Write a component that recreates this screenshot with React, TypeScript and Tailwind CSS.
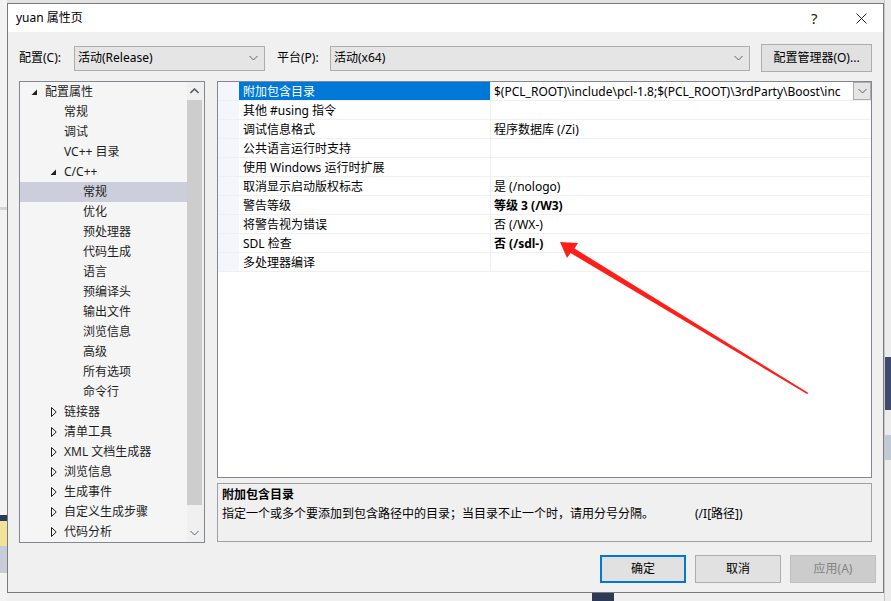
import React from "react";

const FONT = "font-['Noto_Sans','Noto_Sans_CJK_SC',sans-serif]";

type TreeItem = { t: string; lvl: number; tri?: "open" | "closed"; sel?: boolean };

const tree: TreeItem[] = [
  { t: "配置属性", lvl: 0, tri: "open" },
  { t: "常规", lvl: 1 },
  { t: "调试", lvl: 1 },
  { t: "VC++ 目录", lvl: 1 },
  { t: "C/C++", lvl: 1, tri: "open" },
  { t: "常规", lvl: 2, sel: true },
  { t: "优化", lvl: 2 },
  { t: "预处理器", lvl: 2 },
  { t: "代码生成", lvl: 2 },
  { t: "语言", lvl: 2 },
  { t: "预编译头", lvl: 2 },
  { t: "输出文件", lvl: 2 },
  { t: "浏览信息", lvl: 2 },
  { t: "高级", lvl: 2 },
  { t: "所有选项", lvl: 2 },
  { t: "命令行", lvl: 2 },
  { t: "链接器", lvl: 1, tri: "closed" },
  { t: "清单工具", lvl: 1, tri: "closed" },
  { t: "XML 文档生成器", lvl: 1, tri: "closed" },
  { t: "浏览信息", lvl: 1, tri: "closed" },
  { t: "生成事件", lvl: 1, tri: "closed" },
  { t: "自定义生成步骤", lvl: 1, tri: "closed" },
  { t: "代码分析", lvl: 1, tri: "closed" },
];

const props: { name: string; value: string; bold?: boolean }[] = [
  { name: "附加包含目录", value: "$(PCL_ROOT)\\include\\pcl-1.8;$(PCL_ROOT)\\3rdParty\\Boost\\inc" },
  { name: "其他 #using 指令", value: "" },
  { name: "调试信息格式", value: "程序数据库 (/Zi)" },
  { name: "公共语言运行时支持", value: "" },
  { name: "使用 Windows 运行时扩展", value: "" },
  { name: "取消显示启动版权标志", value: "是 (/nologo)" },
  { name: "警告等级", value: "等级 3 (/W3)", bold: true },
  { name: "将警告视为错误", value: "否 (/WX-)" },
  { name: "SDL 检查", value: "否 (/sdl-)", bold: true },
  { name: "多处理器编译", value: "" },
];

function Chevron({ up = false }: { up?: boolean }) {
  return (
    <svg width="9" height="6" viewBox="0 0 9 6" className="shrink-0">
      <polyline
        points={up ? "0.5,5 4.5,1 8.5,5" : "0.5,1 4.5,5 8.5,1"}
        fill="none"
        stroke="#606060"
        strokeWidth={up ? 1.6 : 1}
      />
    </svg>
  );
}

function Triangle({ kind }: { kind: "open" | "closed" }) {
  if (kind === "open") {
    return (
      <svg width="7" height="7" viewBox="0 0 7 7">
        <polygon points="6,0.5 6,6 0.5,6" fill="#1e1e1e" />
      </svg>
    );
  }
  return (
    <svg width="6" height="10" viewBox="0 0 6 10">
      <polygon points="0.5,0.5 5.2,5 0.5,9.5" fill="none" stroke="#1e1e1e" strokeWidth="1" />
    </svg>
  );
}

function Select({ text, width }: { text: string; width: string }) {
  return (
    <div
      className={`${width} h-[25px] bg-[#e5e5e5] border border-[#adadad] flex items-center justify-between pl-[3px] pr-[6px]`}
    >
      <span className="text-[12px] text-black">{text}</span>
      <Chevron />
    </div>
  );
}

function Tree() {
  return (
    <div className="w-[186px] h-[462px] border border-[#828790] bg-[#f5f5f5] flex">
      <div className="w-[167px] flex flex-col">
        {tree.map((it, i) => (
          <div
            key={i}
            className={`h-[20px] flex items-center text-[12px] text-[#1e1e1e] ${it.sel ? "bg-[#cccedb]" : ""}`}
          >
            <div
              className={`${it.lvl === 0 ? "w-[25px]" : it.lvl === 1 ? "w-[44px]" : "w-[63px]"} h-full flex items-center justify-end pr-[7px]`}
            >
              {it.tri && <Triangle kind={it.tri} />}
            </div>
            <span className="whitespace-nowrap">{it.t}</span>
          </div>
        ))}
      </div>
      <div className="w-[17px] flex flex-col bg-[#f0f0f0]">
        <div className="h-[18px] flex items-center justify-center pr-[2px]">
          <Chevron up />
        </div>
        <div className="h-[405px] w-[15px] bg-[#cdcdcd]" />
        <div className="flex-1 flex items-end justify-center pb-[6px] pr-[2px]">
          <Chevron />
        </div>
      </div>
    </div>
  );
}

function Grid() {
  return (
    <div className="w-[655px] h-[397px] border border-[#828790] bg-white flex flex-col overflow-hidden">
      {props.map((p, i) => (
        <div key={i} className="h-[19px] flex border-b border-[#f0f0f0] text-[12px]">
          <div className="w-[21px] bg-[#f4f6fb]" />
          <div
            className={`w-[251px] pl-[4px] pt-[1px] flex items-center whitespace-nowrap ${i === 0 ? "bg-[#0078d7] text-white" : "text-black"}`}
          >
            {p.name}
          </div>
          <div className="flex-1 min-w-0 border-l border-[#f0f0f0] flex items-center">
            <span
              className={`flex-1 min-w-0 pl-[3px] pt-[1px] whitespace-nowrap ${p.bold ? "font-bold" : ""} text-black`}
            >
              {p.value}
            </span>
            {i === 0 && (
              <div className="w-[18px] h-[18px] bg-[#e5e5e5] border border-[#adadad] flex items-center justify-center">
                <Chevron />
              </div>
            )}
          </div>
        </div>
      ))}
    </div>
  );
}

function Description() {
  return (
    <div className="w-[655px] h-[59px] border border-[#a0a0a0] bg-[#f0f0f0] px-[4px] pt-[1px] text-[12px] text-black">
      <div className="h-[19px] leading-[19px] font-bold">附加包含目录</div>
      <div className="h-[19px] leading-[19px] flex whitespace-nowrap">
        <span className="w-[473px]">指定一个或多个要添加到包含路径中的目录；当目录不止一个时，请用分号分隔。</span>
        <span>(/I[路径])</span>
      </div>
    </div>
  );
}

function Dialog() {
  return (
    <div className="h-[590px] border border-[#7a7a7a] bg-[#f0f0f0] flex flex-col">
      <div className="h-[28px] bg-white flex items-center pl-[8px] pr-[16px] text-[12px] text-black">
        <span className="flex-1">yuan 属性页</span>
        <span className="text-[15px] w-[12px] mr-[33px] text-[#222]">?</span>
        <svg width="11" height="11" viewBox="0 0 11 11">
          <line x1="0.5" y1="0.5" x2="10.5" y2="10.5" stroke="#222" strokeWidth="1" />
          <line x1="10.5" y1="0.5" x2="0.5" y2="10.5" stroke="#222" strokeWidth="1" />
        </svg>
      </div>

      <div className="flex flex-col pl-[11px] pt-[12px]">
        <div className="h-[28px] flex items-center text-[12px] text-black">
          <span className="w-[55px]">配置(C):</span>
          <Select text="活动(Release)" width="w-[191px]" />
          <span className="w-[53px] ml-[12px]">平台(P):</span>
          <Select text="活动(x64)" width="w-[420px]" />
          <div className="w-[111px] h-[28px] ml-[11px] bg-[#e1e1e1] border border-[#adadad] flex items-center justify-center">
            配置管理器(O)...
          </div>
        </div>

        <div className="flex gap-[12px] mt-[9px]">
          <Tree />
          <div className="flex flex-col gap-[5px]">
            <Grid />
            <Description />
          </div>
        </div>

        <div className="flex justify-end gap-[9px] pr-[7px] mt-[12px] text-[12px]">
          <div className="w-[86px] h-[28px] bg-[#e1e1e1] border-2 border-[#0078d7] flex items-center justify-center text-black">
            确定
          </div>
          <div className="w-[86px] h-[28px] bg-[#e1e1e1] border border-[#adadad] flex items-center justify-center text-black">
            取消
          </div>
          <div className="w-[86px] h-[28px] bg-[#cccccc] border border-[#bfbfbf] flex items-center justify-center text-[#838383]">
            应用(A)
          </div>
        </div>
      </div>
    </div>
  );
}

export default function App() {
  return (
    <div className={`w-[891px] h-[601px] relative overflow-hidden flex bg-[#f0f0f0] ${FONT}`}>
      <div className="w-[7px] h-full flex flex-col bg-[#f3f3f3]">
        <div className="h-[207px]" />
        <div className="h-[3px] bg-[#d4d4d4]" />
        <div className="h-[305px]" />
        <div className="h-[6px] bg-[#2b3a5b]" />
        <div className="h-[25px] bg-[#f1e398]" />
        <div className="h-[27px] bg-[#c8cbd8]" />
        <div className="flex-1" />
      </div>
      <div className="w-[877px] flex flex-col">
        <div className="h-[3px] bg-[#e2e2e2]" />
        <Dialog />
        <div className="flex-1 flex bg-[#f0f0f0]">
          <div className="w-[585px]" />
          <div className="w-[22px] bg-[#2d3a55]" />
        </div>
      </div>
      <div className="w-[7px] h-full flex flex-col bg-[#ececec] border-l border-[#c8c8c8]">
        <div className="h-[357px]" />
        <div className="h-[53px] bg-[#3d4b6e]" />
        <div className="h-[25px]" />
        <div className="h-[25px] bg-[#c2c8d8]" />
        <div className="flex-1" />
      </div>

      <svg
        className="absolute inset-0 pointer-events-none"
        width="891"
        height="601"
        viewBox="0 0 891 601"
      >
        <polygon
          points="560,242 578,243 574.5,248.5 808.5,393 807,394 570.5,253 567,258"
          fill="#ff1f1a"
        />
      </svg>
    </div>
  );
}
